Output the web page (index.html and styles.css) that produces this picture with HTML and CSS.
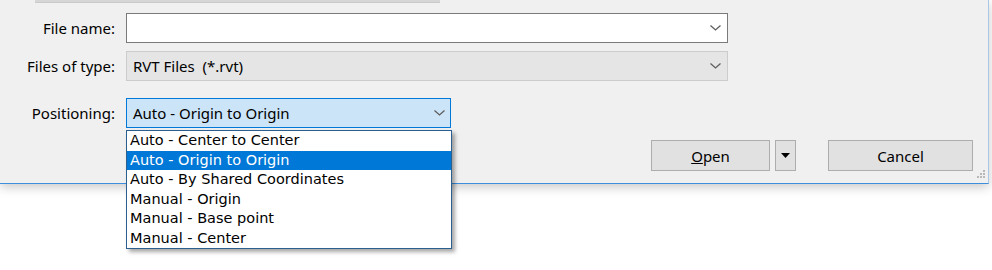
FILE: index.html
```html
<!DOCTYPE html>
<html>
<head>
<meta charset="utf-8">
<link rel="stylesheet" href="styles.css">
</head>
<body>
<div class="dialog">
  <div class="topbar"></div>
  <div class="form">
    <label class="lbl">File name:</label>
    <div class="combo combo-edit">
      <span class="val"></span>
      <svg class="chev" width="11" height="6" viewBox="0 0 11 6"><path d="M0.5 0.5 L5.5 5 L10.5 0.5" fill="none" stroke="#5f5f5f" stroke-width="1.3"/></svg>
    </div>
    <label class="lbl">Files of type:</label>
    <div class="combo combo-dis">
      <span class="val">RVT Files&nbsp; (*.rvt)</span>
      <svg class="chev" width="11" height="6" viewBox="0 0 11 6"><path d="M0.5 0.5 L5.5 5 L10.5 0.5" fill="none" stroke="#5f5f5f" stroke-width="1.3"/></svg>
    </div>
    <label class="lbl lbl-pos">Positioning:</label>
    <div class="poswrap">
      <div class="combo combo-open">
        <span class="val">Auto - Origin to Origin</span>
        <svg class="chev" width="11" height="6" viewBox="0 0 11 6"><path d="M0.5 0.5 L5.5 5 L10.5 0.5" fill="none" stroke="#5f5f5f" stroke-width="1.3"/></svg>
      </div>
      <ul class="list">
        <li>Auto - Center to Center</li>
        <li class="sel">Auto - Origin to Origin</li>
        <li>Auto - By Shared Coordinates</li>
        <li>Manual - Origin</li>
        <li>Manual - Base point</li>
        <li>Manual - Center</li>
      </ul>
    </div>
  </div>
  <div class="buttons">
    <button class="btn btn-open"><u>O</u>pen</button>
    <button class="btn btn-arrow"><svg width="9" height="5" viewBox="0 0 9 5"><path d="M0 0 H9 L4.5 5 Z" fill="#000"/></svg></button>
    <button class="btn btn-cancel">Cancel</button>
  </div>
  <svg class="grip" width="12" height="12" viewBox="0 0 12 12">
    <g fill="#b8b8b8">
      <rect x="9" y="1" width="2" height="2"/>
      <rect x="6" y="4" width="2" height="2"/><rect x="9" y="4" width="2" height="2"/>
      <rect x="3" y="7" width="2" height="2"/><rect x="6" y="7" width="2" height="2"/><rect x="9" y="7" width="2" height="2"/>
    </g>
  </svg>
</div>
</body>
</html>
```
FILE: styles.css
```css
html, body {
  margin: 0;
  padding: 0;
  background: #ffffff;
}
body {
  width: 992px;
  height: 270px;
  overflow: hidden;
  font-family: "Noto Sans", "Open Sans", sans-serif;
  font-size: 15px;
  color: #000;
}
.dialog {
  position: relative;
  width: 988px;
  height: 183px;
  background: #f0f0f0;
  border-bottom: 1px solid #3d8fdc;
  border-right: 1px solid #a9c7e6;
  box-shadow: 0 3px 10px rgba(0, 0, 0, 0.22);
  display: flex;
  flex-direction: column;
}
.topbar {
  margin-left: 35px;
  width: 405px;
  height: 2px;
  background: #d6d6d6;
  border-bottom: 1px solid #c9c9c9;
}
.form {
  margin-top: 10px;
  display: grid;
  grid-template-columns: 115px 602px;
  column-gap: 11px;
  row-gap: 8px;
  align-items: center;
}
.lbl {
  text-align: right;
  white-space: nowrap;
  line-height: 30px;
  font-size: 15px;
}
.lbl-pos {
  margin-top: 9px;
  align-self: start;
}
.combo {
  box-sizing: border-box;
  height: 30px;
  display: flex;
  align-items: center;
  justify-content: space-between;
  padding: 0 6px 0 6px;
}
.combo .val {
  white-space: nowrap;
  font-size: 15px;
}
.combo-edit {
  background: #ffffff;
  border: 1px solid #7a7a7a;
}
.combo-dis {
  background: #e5e5e5;
  border: 1px solid #cccccc;
}
.chev {
  flex: none;
}
.poswrap {
  position: relative;
  margin-top: 9px;
  width: 325px;
}
.combo-open {
  background: #cce4f7;
  border: 1px solid #0078d7;
  padding-right: 5px;
}
.list {
  position: absolute;
  left: 0;
  top: 32px;
  width: 326px;
  box-sizing: border-box;
  margin: 0;
  padding: 0;
  list-style: none;
  background: #ffffff;
  border: 1px solid #2b5f8f;
  box-shadow: 3px 3px 4px rgba(0, 0, 0, 0.35);
  font-family: "DejaVu Sans", Verdana, sans-serif;
  font-size: 14.5px;
  z-index: 5;
}
.list li {
  height: 19.5px;
  line-height: 19.5px;
  padding-left: 3px;
  white-space: nowrap;
}
.list li.sel {
  background: #0078d7;
  color: #ffffff;
}
.buttons {
  margin-top: 12px;
  display: flex;
  padding-left: 651px;
  align-items: center;
}
.btn {
  box-sizing: border-box;
  height: 31px;
  background: #e1e1e1;
  border: 1px solid #adadad;
  font-family: "Noto Sans", "Open Sans", sans-serif;
  font-size: 15px;
  color: #000;
  padding: 0;
  margin: 0;
}
.btn-open {
  width: 119px;
}
.btn-arrow {
  width: 21px;
  margin-left: 5px;
  display: flex;
  align-items: center;
  justify-content: center;
}
.btn-cancel {
  width: 145px;
  margin-left: 32px;
}
.grip {
  position: absolute;
  right: 2px;
  bottom: 2px;
}
```
